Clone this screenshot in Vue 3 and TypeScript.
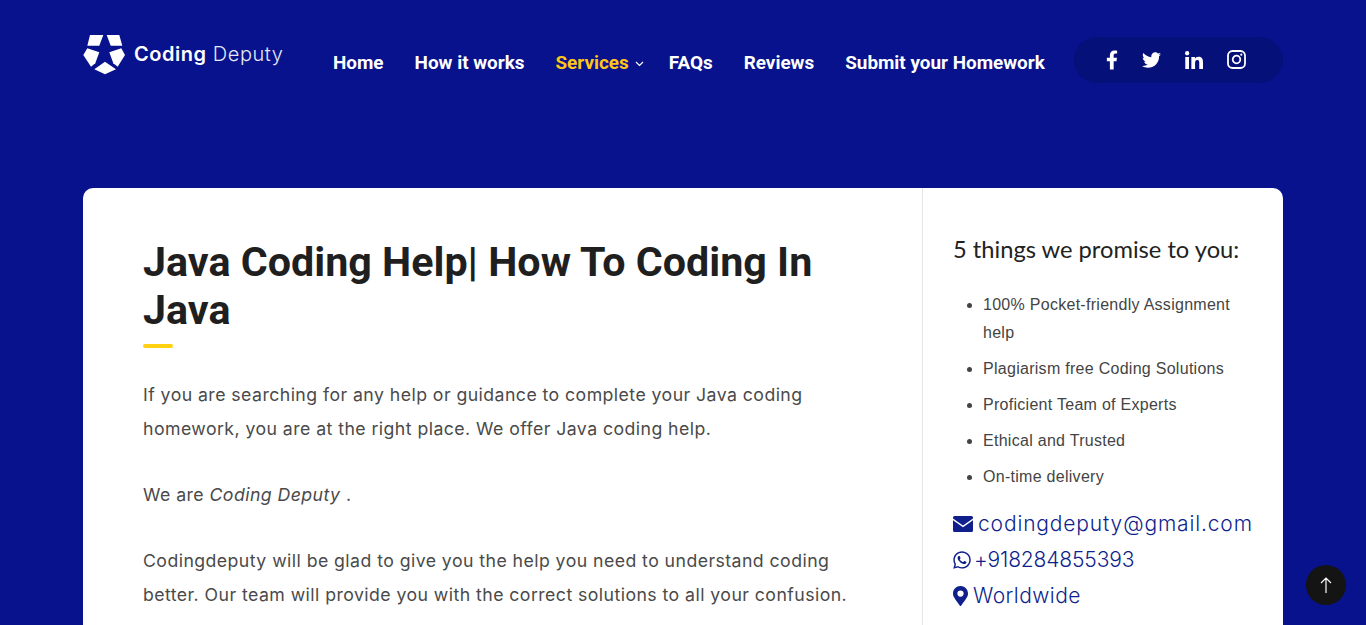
<script setup lang="ts">
const navItems: { label: string; active?: boolean; caret?: boolean }[] = [
  { label: 'Home' },
  { label: 'How it works' },
  { label: 'Services', active: true, caret: true },
  { label: 'FAQs' },
  { label: 'Reviews' },
  { label: 'Submit your Homework' },
]
const promises = [
  '100% Pocket-friendly Assignment help',
  'Plagiarism free Coding Solutions',
  'Proficient Team of Experts',
  'Ethical and Trusted',
  'On-time delivery',
]
</script>

<template>
  <div class="page">
    <header class="header">
      <div class="logo">
        <svg class="logo-mark" width="42" height="42" viewBox="0 0 42 42" fill="#fff">
          <polygon points="7,1 20.300,1 16.300,11.700 4.300,11.700" />
          <polygon points="23.700,1 36.300,1 39.300,11.700 27.700,11.700" />
          <polygon points="4.300,14.300 16.300,18.300 12.300,29.300 8,32.700 .3,21" />
          <polygon points="38.300,14.300 26.300,18.300 30.300,29.300 34.700,32.700 42,21" />
          <polygon points="22,27.700 33,35.300 22,40.300 11.300,35.300" />
        </svg>
        <span class="logo-text"><b>Coding</b> Deputy</span>
      </div>
      <nav class="nav">
        <a v-for="item in navItems" :key="item.label" class="nav-link" :class="{ active: item.active }">
          {{ item.label }}
          <svg v-if="item.caret" class="caret" width="9" height="6" viewBox="0 0 9 6" fill="none" stroke="#fff" stroke-width="1.200">
            <path d="M1 1l3.500 3.500L8 1" />
          </svg>
        </a>
      </nav>
      <div class="social">
        <svg width="12" height="20" viewBox="0 0 320 512" fill="#fff"><path d="M279 288l14-93h-89v-60c0-25 12-50 52-50h41V6s-37-6-72-6c-73 0-121 44-121 125v70H23v93h81v224h100V288z"/></svg>
        <svg width="19" height="16" viewBox="0 0 512 416" fill="#fff"><path d="M459 104c.3 4.500.3 9 .3 13.600 0 138.700-105.600 298.600-298.600 298.600-59.500 0-114.700-17.200-161.100-47 8.400 1 16.600 1.300 25.300 1.300 49 0 94.200-16.600 130.300-44.800-46.100-1-84.800-31.200-98.100-72.800 6.500 1 13 1.600 19.800 1.600 9.400 0 18.800-1.300 27.600-3.600C56.500 241.300 20.800 199.400 20.800 149v-1.300c14 7.800 30.200 12.700 47.400 13.300C39.800 142.100 21.300 109.900 21.300 73.500c0-19.500 5.200-37.400 14.300-53C87.400 84.300 165.100 126 252.400 130.600c-1.600-7.800-2.600-15.900-2.600-24C249.800 48.800 296.600 1.700 354.700 1.700c30.200 0 57.500 12.700 76.700 33.100 23.700-4.500 46.500-13.300 66.600-25.300-7.800 24-24.400 44.200-46.100 57.200 21.100-2.300 41.600-8.100 60.400-16.200-14.300 20.800-32.200 39.300-52.600 54.300z"/></svg>
        <svg width="18" height="18" viewBox="0 0 448 448" fill="#fff"><path d="M100 448H7V149h93zM54 108C24 108 0 83 0 54a54 54 0 01108 0c0 29-24 54-54 54zm394 340h-93V302c0-35-1-79-48-79-48 0-56 38-56 77v148h-93V149h89v41h1c12-24 43-48 88-48 94 0 112 62 112 142z"/></svg>
        <svg width="19" height="19" viewBox="0 0 19 19" fill="none" stroke="#fff" stroke-width="1.800">
          <rect x="1" y="1" width="17" height="17" rx="4.500" />
          <circle cx="9.500" cy="9.500" r="3.800" />
          <circle cx="14.300" cy="4.700" r="1.100" fill="#fff" stroke="none" />
        </svg>
      </div>
    </header>

    <main class="card">
      <section class="article">
        <h1 class="title">Java Coding Help| How To Coding In Java</h1>
        <div class="title-rule"></div>
        <p>If you are searching for any help or guidance to complete your Java coding homework, you are at the right place. We offer Java coding help.</p>
        <p>We are <em>Coding Deputy</em> .</p>
        <p>Codingdeputy will be glad to give you the help you need to understand coding better. Our team will provide you with the correct solutions to all your confusion.</p>
      </section>
      <aside class="sidebar">
        <h2 class="side-title">5 things we promise to you:</h2>
        <ul class="promises">
          <li v-for="p in promises" :key="p">{{ p }}</li>
        </ul>
        <div class="contact email">
          <svg width="20" height="16" viewBox="0 0 20 16"><path fill="#0f1f8c" d="M1.500 0h17A1.500 1.500 0 0120 1.500v.9l-10 7-10-7v-.9A1.500 1.500 0 011.500 0zM0 4.300v10.200A1.500 1.500 0 001.500 16h17a1.500 1.500 0 001.500-1.500V4.300l-10 7z"/></svg>
          codingdeputy@gmail.com
        </div>
        <div class="contact phone">
          <svg width="18" height="20" viewBox="0 0 448 512"><path fill="#0f1f8c" d="M380.900 97.100C339 55.100 283.200 32 223.900 32c-122.400 0-222 99.600-222 222 0 39.100 10.200 77.300 29.600 111L0 480l117.700-30.900c32.400 17.700 68.900 27 106.100 27h.1c122.300 0 224.100-99.600 224.100-222 0-59.300-25.200-115-67.100-157zm-157 341.600c-33.200 0-65.700-8.900-94-25.700l-6.700-4-69.800 18.300L72 359.200l-4.400-7c-18.500-29.400-28.200-63.300-28.200-98.200 0-101.700 82.800-184.500 184.600-184.500 49.300 0 95.600 19.200 130.400 54.100 34.800 34.900 56.200 81.200 56.100 130.500 0 101.800-84.900 184.600-186.600 184.600zm101.200-138.200c-5.500-2.800-32.800-16.200-37.900-18-5.100-1.900-8.800-2.800-12.500 2.800-3.700 5.600-14.300 18-17.600 21.800-3.200 3.700-6.500 4.200-12 1.400-32.600-16.300-54-29.100-75.500-66-5.700-9.800 5.700-9.100 16.300-30.300 1.800-3.700.9-6.900-.5-9.700-1.400-2.800-12.500-30.100-17.100-41.200-4.500-10.800-9.100-9.300-12.500-9.500-3.200-.2-6.900-.2-10.600-.2-3.700 0-9.700 1.400-14.800 6.900-5.100 5.600-19.400 19-19.400 46.300 0 27.300 19.900 53.700 22.600 57.400 2.800 3.700 39.100 59.700 94.800 83.800 35.200 15.200 49 16.500 66.600 13.900 10.700-1.600 32.800-13.400 37.400-26.400 4.600-13 4.600-24.100 3.200-26.400-1.300-2.500-5-3.900-10.500-6.600z"/></svg>
          +918284855393
        </div>
        <div class="contact place">
          <svg width="15" height="20" viewBox="0 0 384 512"><path fill="#0f1f8c" d="M172 502C27 291 0 269 0 192 0 86 86 0 192 0s192 86 192 192c0 77-27 99-172 310-9.500 14-30.500 14-40 0zm20-230a80 80 0 100-160 80 80 0 000 160z"/></svg>
          Worldwide
        </div>
      </aside>
    </main>

    <button class="to-top" type="button" aria-label="Back to top">
      <svg width="12" height="16" viewBox="0 0 12 16" fill="none" stroke="#fff" stroke-width="1.200"><path d="M6 16V1M1 6l5-5 5 5"/></svg>
    </button>
  </div>
</template>

<style>
html, body { margin: 0; height: 100%; overflow: hidden; background: #07128c; }
</style>

<style scoped>
.page {
  height: 625px;
  overflow: hidden;
  background: #07128c;
  padding: 0 83px;
  box-sizing: border-box;
  position: relative;
}
.header {
  height: 188px;
  display: flex;
  align-items: flex-start;
}
.logo {
  display: flex;
  align-items: center;
  gap: 9px;
  margin-top: 34px;
  width: 250px;
  flex: none;
}
.logo-text {
  font-family: Inter, sans-serif;
  font-size: 20px;
  color: #e6e8f6;
  font-weight: 300;
  letter-spacing: .55px;
  white-space: nowrap;
  margin-top: -2px;
}
.logo-text b { font-weight: 600; color: #fff; }
.nav {
  display: flex;
  gap: 31px;
  margin-top: 51px;
  font: 700 18.900px/24px Roboto, sans-serif;
  color: #fff;
  flex: none;
}
.nav-link { display: flex; align-items: center; white-space: nowrap; }
.nav-link.active { color: #ffc61a; margin-right: -6px; }
.caret { margin-left: 6px; margin-top: 1px; }
.social {
  margin-left: auto;
  margin-top: 37px;
  width: 209px;
  height: 46px;
  border-radius: 23px;
  background: #051079;
  display: flex;
  align-items: center;
  justify-content: center;
  gap: 24px;
  padding-bottom: 1px;
  box-sizing: border-box;
  padding-right: 5px;
}
.card {
  background: #fff;
  border-radius: 10px 10px 0 0;
  display: flex;
  height: 800px;
}
.article {
  width: 840px;
  box-sizing: border-box;
  padding: 50px 60px 0;
  border-right: 1px solid #e6e6e6;
  font-family: Inter, sans-serif;
  flex: none;
}
.title {
  margin: 0;
  font: 700 41.250px/48px Roboto, sans-serif;
  color: #1f1f1f;
}
.title-rule {
  width: 30px;
  height: 4px;
  background: #ffd110;
  border-radius: 2px;
  margin: 10px 0 30px;
}
.article p {
  margin: 0 0 32px;
  font-size: 17.700px;
  line-height: 34px;
  color: #4a4a4a;
  font-weight: 400;
  letter-spacing: .44px;
}
.sidebar {
  padding: 43px 0 0 30px;
  flex: 1;
  min-width: 0;
}
.side-title {
  margin: 0 0 24px;
  font: 400 23.700px/36px Lato, sans-serif;
  color: #222;
}
.promises {
  margin: 0 0 15px;
  padding: 0 25px 0 30px;
  font: 400 16px/28px "Liberation Sans", sans-serif;
  color: #444;
  letter-spacing: .28px;
}
.promises li { margin-bottom: 8px; }
.contact {
  display: flex;
  align-items: center;
  gap: 5px;
  font: 300 21px/36px Inter, sans-serif;
  color: #0f1f8c;
  white-space: nowrap;
}
.email { letter-spacing: .85px; }
.phone { letter-spacing: -.15px; gap: 3px; }
.place { letter-spacing: .45px; }
.to-top {
  position: absolute;
  right: 20px;
  bottom: 20px;
  width: 40px;
  height: 40px;
  border: 0;
  padding: 0;
  border-radius: 50%;
  background: #141414;
  display: flex;
  align-items: center;
  justify-content: center;
}
</style>
